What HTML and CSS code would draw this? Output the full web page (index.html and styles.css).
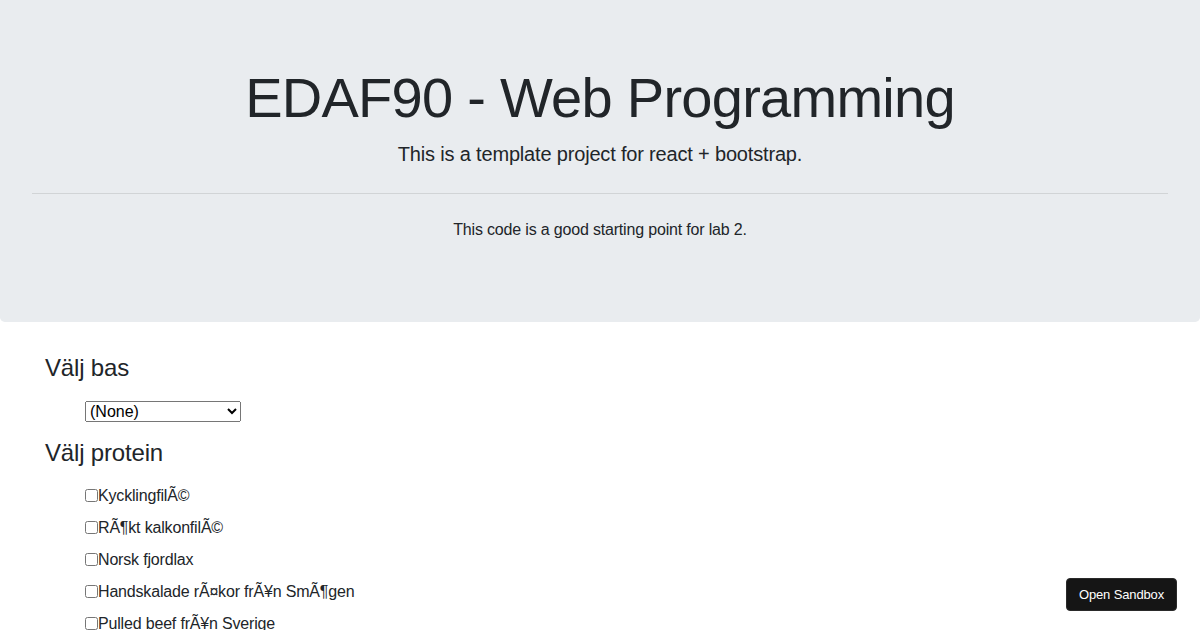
FILE: index.html
```html
<!DOCTYPE html>
<html lang="sv">
<head>
<meta charset="utf-8">
<title>EDAF90</title>
<link rel="stylesheet" href="styles.css">
</head>
<body>
<div class="jumbotron">
  <h1 class="display">EDAF90 - Web Programming</h1>
  <p class="lead">This is a template project for react + bootstrap.</p>
  <hr class="divider">
  <p class="note">This code is a good starting point for lab 2.</p>
</div>
<div class="container">
  <h4 class="section-title">Välj bas</h4>
  <div class="select-field">
    <select class="base-select">
      <option>(None)</option>
    </select>
  </div>
  <h4 class="section-title">Välj protein</h4>
  <label class="check"><input type="checkbox" class="box">KycklingfilÃ©</label>
  <label class="check"><input type="checkbox" class="box">RÃ¶kt kalkonfilÃ©</label>
  <label class="check"><input type="checkbox" class="box">Norsk fjordlax</label>
  <label class="check"><input type="checkbox" class="box">Handskalade rÃ¤kor frÃ¥n SmÃ¶gen</label>
  <label class="check"><input type="checkbox" class="box">Pulled beef frÃ¥n Sverige</label>
</div>
<button class="sandbox-btn">Open Sandbox</button>
</body>
</html>
```
FILE: styles.css
```css
*, *::before, *::after {
  box-sizing: border-box;
}
html, body {
  margin: 0;
  padding: 0;
}
body {
  font-family: "Liberation Sans", Arial, sans-serif;
  font-size: 16px;
  line-height: 1.5;
  color: #212529;
  background: #fff;
  overflow: hidden;
  letter-spacing: -0.011em;
}
.jumbotron {
  background: #e9ecef;
  padding: 64px 32px;
  border-radius: 0 0 4.8px 4.8px;
  margin-bottom: 32px;
  text-align: center;
}
.display {
  font-size: 56px;
  font-weight: 300;
  line-height: 1.2;
  margin: 0 0 8px;
  letter-spacing: -0.013em;
}
.lead {
  font-size: 20px;
  font-weight: 300;
  margin: 0 0 16px;
}
.divider {
  margin: 24px 0;
  border: 0;
  border-top: 1px solid rgba(0, 0, 0, 0.1);
}
.note {
  margin: 0 0 16px;
}
.container {
  max-width: 1140px;
  margin: 0 auto;
  padding: 0 15px;
}
.section-title {
  font-size: 24px;
  font-weight: 500;
  line-height: 1.2;
  margin: 0 0 8px;
}
.select-field {
  margin: 18px 0 17px;
  padding-left: 40px;
}
.base-select {
  display: block;
  width: 156px;
  height: 21px;
  font-family: "Liberation Sans", Arial, sans-serif;
  font-size: 16px;
  color: #000;
  margin: 0;
}
.check {
  display: flex;
  align-items: center;
  height: 32px;
  padding: 8px 0 0 40px;
}
.box {
  margin: 0;
  width: 13px;
  height: 13px;
}
.sandbox-btn {
  position: fixed;
  right: 23px;
  bottom: 19px;
  width: 111px;
  height: 33px;
  background: #151515;
  color: #fff;
  border: 1px solid #2a2a2a;
  border-radius: 4px;
  font-family: "Liberation Sans", Arial, sans-serif;
  font-size: 13px;
  letter-spacing: -0.01em;
  padding: 0;
}
```
